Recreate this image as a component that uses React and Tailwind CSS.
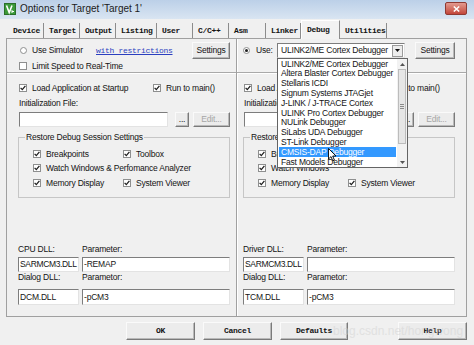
import React from "react"

const tabs = [
  { label: "Device", w: "w-[36px]" },
  { label: "Target", w: "w-[36px]" },
  { label: "Output", w: "w-[36px]" },
  { label: "Listing", w: "w-[41px]" },
  { label: "User", w: "w-[36px]" },
  { label: "C/C++", w: "w-[36px]" },
  { label: "Asm", w: "w-[37px]" },
  { label: "Linker", w: "w-[35px]" },
  { label: "Debug", w: "w-[39px]", active: true },
  { label: "Utilities", w: "w-[47px]" },
]

const debuggers = [
  "ULINK2/ME Cortex Debugger",
  "Altera Blaster Cortex Debugger",
  "Stellaris ICDI",
  "Signum Systems JTAGjet",
  "J-LINK / J-TRACE Cortex",
  "ULINK Pro Cortex Debugger",
  "NULink Debugger",
  "SiLabs UDA Debugger",
  "ST-Link Debugger",
  "CMSIS-DAP Debugger",
  "Fast Models Debugger",
]

const mono = "font-['Liberation_Mono',monospace] text-[8px] tracking-[-0.3px]"

function Check({ checked = true }) {
  return (
    <span className="flex h-[8px] w-[8px] shrink-0 items-center justify-center border border-[#8e8f8f] bg-white">
      {checked && (
        <svg width="6" height="6" viewBox="0 0 6 6">
          <path d="M0.6 2.9 L2.3 4.6 L5.4 0.9" fill="none" stroke="#1e1e1e" strokeWidth="1.3" />
        </svg>
      )}
    </span>
  )
}

function Radio({ checked = false }) {
  return (
    <span className="flex h-[7px] w-[7px] shrink-0 items-center justify-center rounded-full border border-[#8e8f8f] bg-white">
      {checked && <span className="h-[3px] w-[3px] rounded-full bg-[#1e1e1e]" />}
    </span>
  )
}

function CheckLabel({ children, checked = true }) {
  return (
    <div className="flex items-center whitespace-nowrap pl-[1px]">
      <Check checked={checked} />
      <span className="ml-[5px]">{children}</span>
    </div>
  )
}

function Field({ className = "", children }) {
  return (
    <div className={`flex h-full items-center overflow-hidden whitespace-nowrap border border-[#e3e3e3] border-t-[#7d7d7d] border-l-[#7d7d7d] bg-white pl-[1px] ${className}`}>
      {children}
    </div>
  )
}

function Btn({ className = "", children, disabled = false }) {
  return (
    <div
      className={`flex h-full items-center justify-center border border-[#7a7a7a] border-t-[#fafafa] border-l-[#fafafa] bg-[#ececec] shadow-[inset_-1px_-1px_0_#b9b9b9] ${disabled ? "text-[#a6a6a6]" : ""} ${className}`}
    >
      {children}
    </div>
  )
}

function GroupBox({ right = false }) {
  return (
    <div className="mt-[10px] flex h-[61px] w-[212px] flex-col border border-[#c6c6c6] pl-[13px]">
      <div className="-mt-[6px] -ml-[7px] flex h-[11px] w-fit items-center bg-[#f0f0f0] px-[1px]">
        Restore Debug Session Settings
      </div>
      <div className="mt-[5px] flex h-[12px] items-center">
        <div className="w-[90px]">
          <CheckLabel>Breakpoints</CheckLabel>
        </div>
        {!right && <CheckLabel>Toolbox</CheckLabel>}
      </div>
      <div className="mt-[2px] flex h-[12px] items-center">
        <CheckLabel>{right ? "Watch Windows" : "Watch Windows & Perfomance Analyzer"}</CheckLabel>
      </div>
      <div className="mt-[3px] flex h-[12px] items-center">
        <div className="w-[90px]">
          <CheckLabel>Memory Display</CheckLabel>
        </div>
        <CheckLabel>System Viewer</CheckLabel>
      </div>
    </div>
  )
}

function DllBlock({ first, dll, param, dialog }) {
  return (
    <>
      <div className="mt-[45px] flex h-[12px] items-center">
        <span className="w-[64px]">{first}</span>
        <span>Parameter:</span>
      </div>
      <div className="mt-[2px] flex h-[15px]">
        <Field className="w-[61px] tracking-[-0.35px]">{dll}</Field>
        <Field className="ml-[3px] w-[148px]">{param}</Field>
      </div>
      <div className="flex h-[11px] items-center">
        <span className="w-[64px]">Dialog DLL:</span>
        <span>Parametor:</span>
      </div>
      <div className="mt-[6px] flex h-[16px]">
        <Field className="w-[61px]">{dialog}</Field>
        <Field className="ml-[3px] w-[148px]">-pCM3</Field>
      </div>
    </>
  )
}

function LeftPane() {
  return (
    <div className="flex w-[229px] flex-col pl-[11px]">
      <div className="mt-[3px] flex h-[17px] items-center">
        <div className="flex w-[78px] items-center pl-[2px]">
          <Radio />
          <span className="ml-[5px]">Use Simulator</span>
        </div>
        <span className={`w-[96px] text-[#2b3fbf] underline ${mono}`}>with restrictions</span>
        <Btn className="w-[38px]">Settings</Btn>
      </div>
      <div className="mt-[1px] flex h-[12px] items-center">
        <CheckLabel checked={false}>Limit Speed to Real-Time</CheckLabel>
      </div>
      <div className="-ml-[11px] h-[2px] w-[229px] border-t border-b border-t-[#a9a9a9] border-b-white" />
      <div className="mt-[8px] flex h-[12px] items-center">
        <div className="w-[134px]">
          <CheckLabel>Load Application at Startup</CheckLabel>
        </div>
        <CheckLabel>Run to main()</CheckLabel>
      </div>
      <div className="mt-[3px] flex h-[12px] items-center pl-[1px]">Initialization File:</div>
      <div className="mt-[3px] flex h-[15px]">
        <Field className="ml-[1px] w-[149px]" />
        <Btn className="ml-[7px] w-[14px]">...</Btn>
        <Btn className="ml-[4px] w-[37px]" disabled>
          Edit...
        </Btn>
      </div>
      <GroupBox />
      <DllBlock first="CPU DLL:" dll="SARMCM3.DLL" param="-REMAP" dialog="DCM.DLL" />
    </div>
  )
}

function RightPane() {
  return (
    <div className="flex flex-1 flex-col border-l border-l-white pl-[5px]">
      <div className="mt-[3px] flex h-[17px] items-center">
        <div className="flex w-[34px] items-center">
          <Radio checked />
          <span className="ml-[6px]">Use:</span>
        </div>
        <div className="flex h-[15px] w-[128px] items-center border border-[#e3e3e3] border-t-[#7d7d7d] border-l-[#7d7d7d] bg-white pl-[3px]">
          <span className="flex-1 whitespace-nowrap">ULINK2/ME Cortex Debugger</span>
          <span className="mr-px flex h-[12px] w-[11px] items-center justify-center border border-[#9a9a9a] bg-[#ececec]">
            <svg width="5" height="3" viewBox="0 0 5 3">
              <path d="M0 0 H5 L2.5 3 Z" fill="#111" />
            </svg>
          </span>
        </div>
        <Btn className="ml-[10px] w-[40px]">Settings</Btn>
      </div>
      <div className="mt-[1px] h-[12px]" />
      <div className="-ml-[6px] h-[2px] w-[229px] border-t border-b border-t-[#a9a9a9] border-b-white" />
      <div className="mt-[8px] flex h-[12px] items-center">
        <div className="w-[134px]">
          <CheckLabel>Load Application at Startup</CheckLabel>
        </div>
        <CheckLabel>Run to main()</CheckLabel>
      </div>
      <div className="mt-[3px] flex h-[12px] items-center pl-[1px]">Initialization File:</div>
      <div className="mt-[3px] flex h-[15px]">
        <Field className="ml-[1px] w-[149px]" />
        <Btn className="ml-[7px] w-[14px]">...</Btn>
        <Btn className="ml-[4px] w-[37px]" disabled>
          Edit...
        </Btn>
      </div>
      <GroupBox right />
      <DllBlock first="Driver DLL:" dll="SARMCM3.DLL" param="" dialog="TCM.DLL" />
    </div>
  )
}

function DebuggerList() {
  return (
    <div className="absolute left-[277px] top-[58px] z-20 flex h-[110px] w-[131px] border border-[#646464] bg-white">
      <div className="flex flex-1 flex-col">
        {debuggers.map((d, i) => (
          <div key={d} className="flex h-[9.8px] items-center">
            <div
              className={`mx-[1px] flex h-full flex-1 items-center whitespace-nowrap pl-[2px] ${i === 9 ? "bg-[#3399ff] text-white" : ""}`}
            >
              {d}
            </div>
          </div>
        ))}
      </div>
      <div className="flex w-[10px] flex-col bg-[#f2f2f2]">
        <div className="flex h-[10px] items-center justify-center">
          <svg width="5" height="3" viewBox="0 0 5 3">
            <path d="M0 3 H5 L2.5 0 Z" fill="#555" />
          </svg>
        </div>
        <div className="mx-[1px] flex h-[75px] items-center justify-center border border-[#bcbcbc] bg-[#e6e6e6]">
          <div className="flex w-[4px] flex-col gap-[1px]">
            <div className="h-px bg-[#8a8a8a]" />
            <div className="h-px bg-[#8a8a8a]" />
            <div className="h-px bg-[#8a8a8a]" />
          </div>
        </div>
        <div className="flex-1" />
        <div className="flex h-[10px] items-center justify-center">
          <svg width="5" height="3" viewBox="0 0 5 3">
            <path d="M0 0 H5 L2.5 3 Z" fill="#555" />
          </svg>
        </div>
      </div>
    </div>
  )
}

export default function App() {
  return (
    <div className="relative h-[345px] w-[474px] overflow-hidden bg-[#f0f0f0] font-['Liberation_Sans',Arial,sans-serif] text-[8.5px] leading-none tracking-[-0.2px] text-[#141414]">
      <div className="flex h-[19px] items-start bg-linear-to-b from-[#bcd0e8] to-[#d9e5f2] pl-[4px]">
        <svg className="mt-[3px]" width="12" height="12" viewBox="0 0 12 12">
          <rect width="12" height="12" fill="#3c9a3a" />
          <rect x="0.5" y="0.5" width="11" height="11" fill="none" stroke="#2a6f29" />
          <path d="M2.5 2.5 L5.2 9.5 L8 2.5" fill="none" stroke="#fff" strokeWidth="1.6" />
          <path d="M8 7 V10 M8 8.5 H10" stroke="#fff" strokeWidth="1" />
        </svg>
        <span className="ml-[4px] mt-[4px] text-[10px] tracking-normal text-[#1b1b1b]">Options for Target 'Target 1'</span>
        <div className="mt-[2px] mr-[7px] ml-auto flex h-[13px] w-[22px] items-center justify-center rounded-[2px] border border-[#8f3a33] bg-linear-to-b from-[#e29a90] to-[#c2453a]">
          <svg width="7" height="6" viewBox="0 0 7 6">
            <path d="M0.8 0.5 L6.2 5.5 M6.2 0.5 L0.8 5.5" stroke="#fff" strokeWidth="1.5" />
          </svg>
        </div>
      </div>

      <div className={`flex h-[19px] items-end pl-[8px] font-bold ${mono}`}>
        {tabs.map((t) =>
          t.active ? (
            <div
              key={t.label}
              className={`relative z-10 -mb-px flex h-[19px] items-center border border-b-0 border-[#8c8c8c] border-t-white border-l-white bg-[#f2f2f2] pl-[5px] ${t.w}`}
            >
              {t.label}
            </div>
          ) : (
            <div key={t.label} className={`flex h-[15px] items-center border-r border-r-[#8c8c8c] pl-[5px] ${t.w}`}>
              {t.label}
            </div>
          )
        )}
      </div>

      <div className="ml-[6px] flex h-[279px] w-[461px] border border-[#a0a0a0]">
        <LeftPane />
        <div className="w-px bg-[#a0a0a0]" />
        <RightPane />
      </div>

      <div className={`mt-[5px] flex h-[18px] pl-[126px] font-bold ${mono}`}>
        <Btn className="w-[69px] border-[#3c3c3c]">OK</Btn>
        <Btn className="ml-[8px] w-[69px]">Cancel</Btn>
        <Btn className="ml-[8px] w-[68px]">Defaults</Btn>
        <Btn className="ml-[50px] w-[69px]">Help</Btn>
      </div>

      <DebuggerList />

      <svg className="absolute left-[328px] top-[148px] z-30" width="9" height="14" viewBox="0 0 9 14">
        <path d="M0.5 0.5 V11 L3 8.6 L4.8 12.8 L6.4 12.1 L4.7 8 H8 Z" fill="#fff" stroke="#000" strokeWidth="0.9" />
      </svg>

      <div className="pointer-events-none absolute left-[333px] top-[325px] z-30 text-[12px] tracking-normal text-[#d2d2d2] opacity-50">
        blog.csdn.net/hongwong
      </div>
    </div>
  )
}
